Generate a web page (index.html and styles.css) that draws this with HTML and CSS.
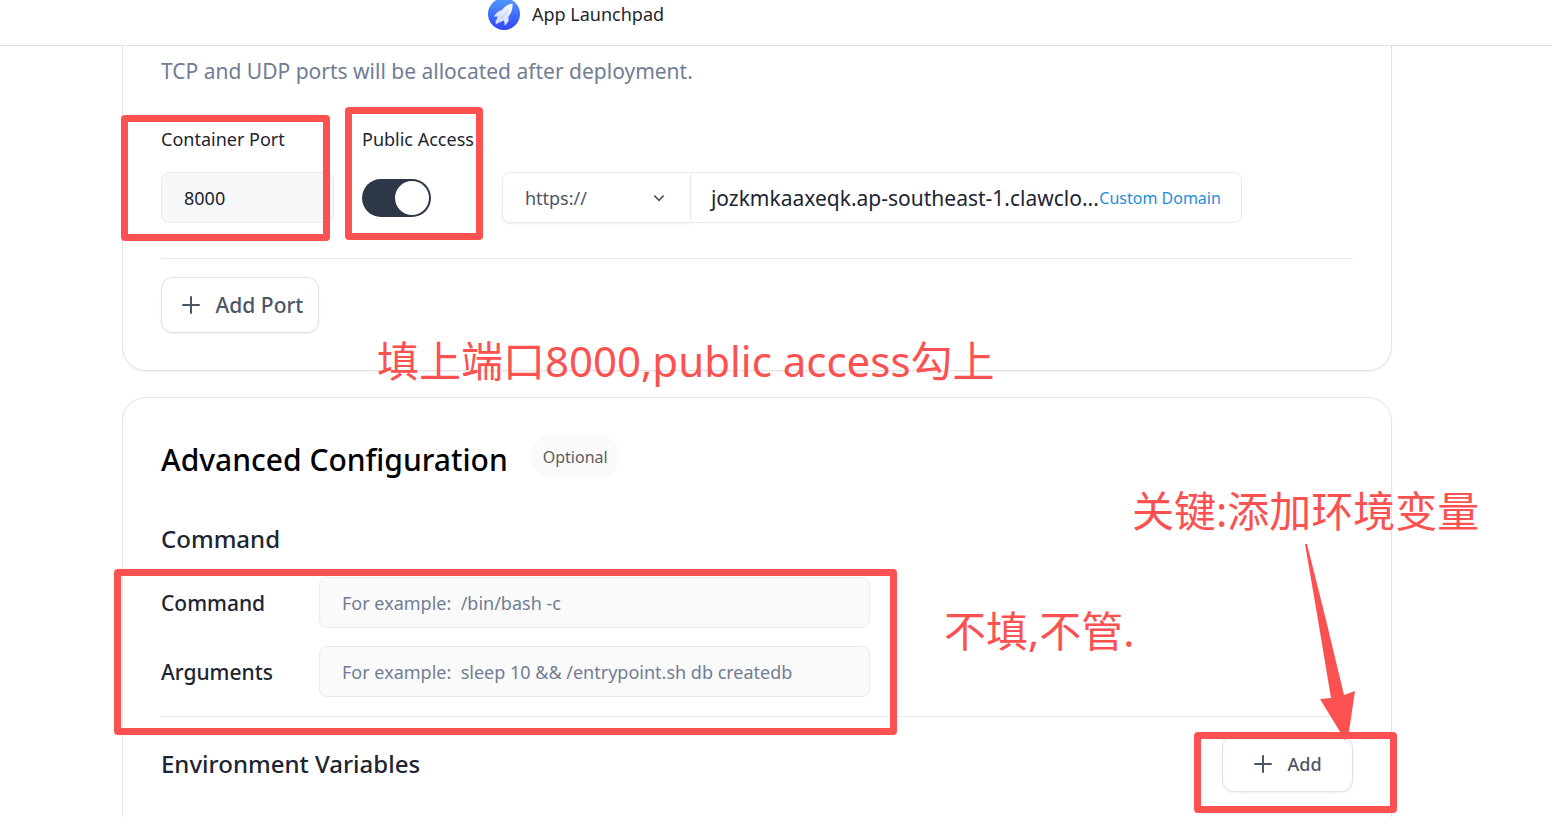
FILE: index.html
```html
<!DOCTYPE html>
<html lang="en">
<head>
    <meta charset="UTF-8">
    <meta name="viewport" content="width=device-width, initial-scale=1.0">
    <title>App Launchpad</title>
    <link rel="stylesheet" href="styles.css">
</head>
<body>
    <header class="topbar">
        <svg class="logo" viewBox="0 0 32 32" aria-hidden="true">
            <defs>
                <linearGradient id="logoBg" x1="0" y1="0" x2="0" y2="1">
                    <stop offset="0" stop-color="#4f9bfb"/>
                    <stop offset="1" stop-color="#3345f5"/>
                </linearGradient>
                <linearGradient id="rocket" x1="1" y1="0" x2="0" y2="1">
                    <stop offset="0" stop-color="#ffffff"/>
                    <stop offset="1" stop-color="#c3d1fe"/>
                </linearGradient>
            </defs>
            <circle cx="16" cy="16" r="16" fill="url(#logoBg)"/>
            <path fill="url(#rocket)" d="M24.500 5.500C20.500 6 16.500 8.500 14 12L10 13.500L5.500 18.500L9.500 18.500L9 21L7.500 23L7.800 26.500L11 24.500L13 24L14 23L16 22.800L17 28L20.500 23L20.500 18.500C23.500 15 25 10 24.500 5.500Z"/>
            <path fill="#c3d1fe" d="M20 11.500L20.800 12.300L13.300 21L12.300 20Z"/>
        </svg>
        <span class="app-name">App Launchpad</span>
    </header>

    <main class="content">
        <section class="card network">
            <p class="hint">TCP and UDP ports will be allocated after deployment.</p>
            <div class="port-row">
                <div class="field port-field">
                    <label for="port">Container Port</label>
                    <input class="text-input" id="port" type="text" value="8000">
                </div>
                <div class="field">
                    <label for="public">Public Access</label>
                    <div class="switch-box">
                        <input class="switch" id="public" type="checkbox" role="switch" checked>
                    </div>
                </div>
                <div class="address">
                    <div class="protocol">
                        <select aria-label="Protocol">
                            <option>https://</option>
                            <option>grpcs://</option>
                            <option>wss://</option>
                        </select>
                        <svg viewBox="0 0 12 12" aria-hidden="true"><path d="M2 4l4 4 4-4"/></svg>
                    </div>
                    <div class="domain">
                        <span class="domain-name">jozkmkaaxeqk.ap-southeast-1.clawclo...</span>
                        <a href="#">Custom Domain</a>
                    </div>
                </div>
            </div>
            <hr>
            <button class="btn btn-port" type="button">
                <svg viewBox="0 0 20 20" aria-hidden="true"><path d="M10 2v16M2 10h16"/></svg>
                Add Port
            </button>
        </section>

        <section class="card advanced">
            <div class="card-head">
                <h2>Advanced Configuration</h2>
                <span class="badge">Optional</span>
            </div>
            <h3>Command</h3>
            <div class="command-row">
                <label for="command">Command</label>
                <input class="text-input" id="command" type="text" placeholder="For example:  /bin/bash -c">
            </div>
            <div class="command-row">
                <label for="arguments">Arguments</label>
                <input class="text-input" id="arguments" type="text" placeholder="For example:  sleep 10 &amp;&amp; /entrypoint.sh db createdb">
            </div>
            <hr>
            <div class="env-row">
                <h3>Environment Variables</h3>
                <button class="btn btn-add" type="button">
                    <svg viewBox="0 0 20 20" aria-hidden="true"><path d="M10 2v16M2 10h16"/></svg>
                    Add
                </button>
            </div>
        </section>
    </main>

    <!-- Walkthrough notes drawn over the form -->
    <div class="notes" lang="zh-CN">
        <div class="mark mark-port"></div>
        <div class="mark mark-public"></div>
        <div class="mark mark-command"></div>
        <div class="mark mark-env"></div>
        <p class="note note-port">填上端口8000,public access勾上</p>
        <p class="note note-env">关键:添加环境变量</p>
        <p class="note note-skip">不填,不管.</p>
        <svg class="arrow" viewBox="0 0 56 198" aria-hidden="true">
            <path d="M5 1L7 1L26 77L44 152L55 148L48 195L45 197L20 156L31 155L18 77Z"/>
        </svg>
    </div>
</body>
</html>
```

FILE: styles.css
```css
* {
    box-sizing: border-box;
}
body {
    position: relative;
    height: 100vh;
    margin: 0;
    overflow: hidden;
    font-family: "Noto Sans", "Noto Sans CJK SC", sans-serif;
    font-size: 18px;
    line-height: 24px;
    color: #1d2532;
    background: #fff;
}
h2, h3, p {
    margin: 0;
}
button, input, select {
    font: inherit;
    color: inherit;
}
hr {
    height: 1px;
    margin: 0;
    border: none;
    background: #eaebf0;
}

/* Top bar */
.topbar {
    display: flex;
    align-items: flex-end;
    gap: 12px;
    height: 46px;
    padding: 0 488px 15px;
    border-bottom: 1px solid #dfe2ea;
}
.logo {
    flex: none;
    width: 32px;
    height: 32px;
}
.app-name {
    line-height: 32px;
    white-space: nowrap;
    color: #24282c;
}

/* Cards */
.content {
    margin: 0 160px 0 122px;
}
.card {
    padding: 38px;
    border: 1px solid #e2e3e6;
    border-radius: 24px;
    box-shadow: 0 1px 2px rgba(0, 0, 0, 0.06);
}
.network {
    padding-top: 9px;
    padding-bottom: 37px;
    border-top: none;
    border-top-left-radius: 0;
    border-top-right-radius: 0;
}
.hint {
    font-size: 21px;
    line-height: 32px;
    color: #717d94;
}

/* Port settings */
.port-row {
    display: flex;
    align-items: flex-end;
    gap: 28px;
    margin: 40px 0 35px;
}
.field {
    display: flex;
    flex-direction: column;
    gap: 21px;
}
.field label {
    white-space: nowrap;
}
.port-field {
    width: 173px;
}
.text-input {
    width: 100%;
    height: 51px;
    padding: 0 22px;
    border: 1px solid #e8ebf0;
    border-radius: 8px;
    background: #f7f8fa;
}
.switch-box {
    display: flex;
    align-items: center;
    height: 51px;
}
.switch {
    appearance: none;
    display: flex;
    width: 69px;
    height: 38px;
    margin: 0;
    padding: 2px;
    border-radius: 19px;
    background: #cbd2df;
}
.switch::before {
    content: "";
    width: 34px;
    height: 34px;
    border-radius: 50%;
    background: #fff;
}
.switch:checked {
    justify-content: flex-end;
    background: #2d3748;
}
.address {
    display: flex;
    flex: 0 1 740px;
    height: 51px;
}
.protocol {
    display: grid;
    flex: none;
    align-items: center;
    width: 189px;
}
.protocol select,
.protocol svg {
    grid-area: 1 / 1;
}
.protocol select {
    appearance: none;
    height: 51px;
    padding: 0 22px;
    border: 1px solid #e8ebf0;
    border-radius: 8px 0 0 8px;
    color: #4b5568;
    background: #fff;
    box-shadow: 0 1px 2px rgba(19, 51, 107, 0.08);
}
.protocol svg {
    justify-self: end;
    width: 14px;
    height: 14px;
    margin-right: 25px;
    fill: none;
    stroke: #4b5568;
    stroke-width: 1.5;
    pointer-events: none;
}
.domain {
    display: flex;
    flex: 1;
    align-items: center;
    justify-content: space-between;
    padding: 0 20px;
    border: 1px solid #e8ebf0;
    border-left: none;
    border-radius: 0 8px 8px 0;
    white-space: nowrap;
}
.domain-name {
    font-size: 21px;
}
.domain a {
    font-size: 16px;
    color: #1c8edb;
    text-decoration: none;
}

/* Buttons */
.btn {
    display: flex;
    align-items: center;
    justify-content: center;
    height: 56px;
    border: 1px solid #dfe2ea;
    border-radius: 12px;
    font-weight: 500;
    color: #4b5568;
    background: #fff;
    box-shadow: 0 1px 2px rgba(19, 51, 107, 0.08);
}
.btn svg {
    flex: none;
    width: 20px;
    height: 20px;
    fill: none;
    stroke: currentColor;
    stroke-width: 2;
    stroke-linecap: round;
}
.btn-port {
    gap: 15px;
    width: 158px;
    margin-top: 18px;
    padding: 0 12px 0 16px;
    font-size: 21px;
    white-space: nowrap;
}
.btn-add {
    gap: 14px;
    width: 131px;
}

/* Advanced configuration */
.advanced {
    margin-top: 26px;
    padding-top: 37px;
    padding-bottom: 52px;
}
.advanced hr {
    margin-top: 19px;
}
.card-head {
    display: flex;
    align-items: flex-start;
    gap: 23px;
    margin-bottom: 38px;
}
h2 {
    font-size: 30px;
    font-weight: 500;
    line-height: 50px;
    color: #000;
}
.badge {
    padding: 0 12px;
    border-radius: 22px;
    font-size: 16px;
    line-height: 44px;
    color: #5c5d60;
    background: #fafafa;
}
h3 {
    font-size: 24px;
    font-weight: 500;
    line-height: 32px;
}
.advanced h3 + .command-row {
    margin-top: 22px;
}
.command-row {
    display: grid;
    grid-template-columns: 158px minmax(0, 551px);
    align-items: center;
    margin-bottom: 18px;
}
.command-row label {
    font-size: 21px;
    font-weight: 500;
}
.command-row .text-input {
    background: #fafafa;
}
.text-input::placeholder {
    color: #717d94;
    opacity: 1;
}
.env-row {
    display: flex;
    align-items: center;
    justify-content: space-between;
    margin-top: 19px;
}

/* Notes */
.notes {
    position: absolute;
    inset: 0;
    pointer-events: none;
}
.mark {
    position: absolute;
    border: 7px solid #fb5251;
    border-radius: 4px;
}
.mark-port {
    left: 121px;
    top: 115px;
    width: 209px;
    height: 126px;
}
.mark-public {
    left: 345px;
    top: 107px;
    width: 138px;
    height: 133px;
}
.mark-command {
    left: 114px;
    top: 569px;
    width: 783px;
    height: 166px;
}
.mark-env {
    left: 1194px;
    top: 732px;
    width: 203px;
    height: 81px;
}
.note {
    position: absolute;
    font-size: 42px;
    font-weight: 400;
    line-height: 60px;
    white-space: nowrap;
    color: #fb5251;
}
.note-port {
    left: 377px;
    top: 331px;
}
.note-env {
    left: 1132px;
    top: 481px;
}
.note-skip {
    left: 944px;
    top: 601px;
}
.arrow {
    position: absolute;
    left: 1300px;
    top: 543px;
    width: 56px;
    height: 198px;
    fill: #fb5251;
}
```
